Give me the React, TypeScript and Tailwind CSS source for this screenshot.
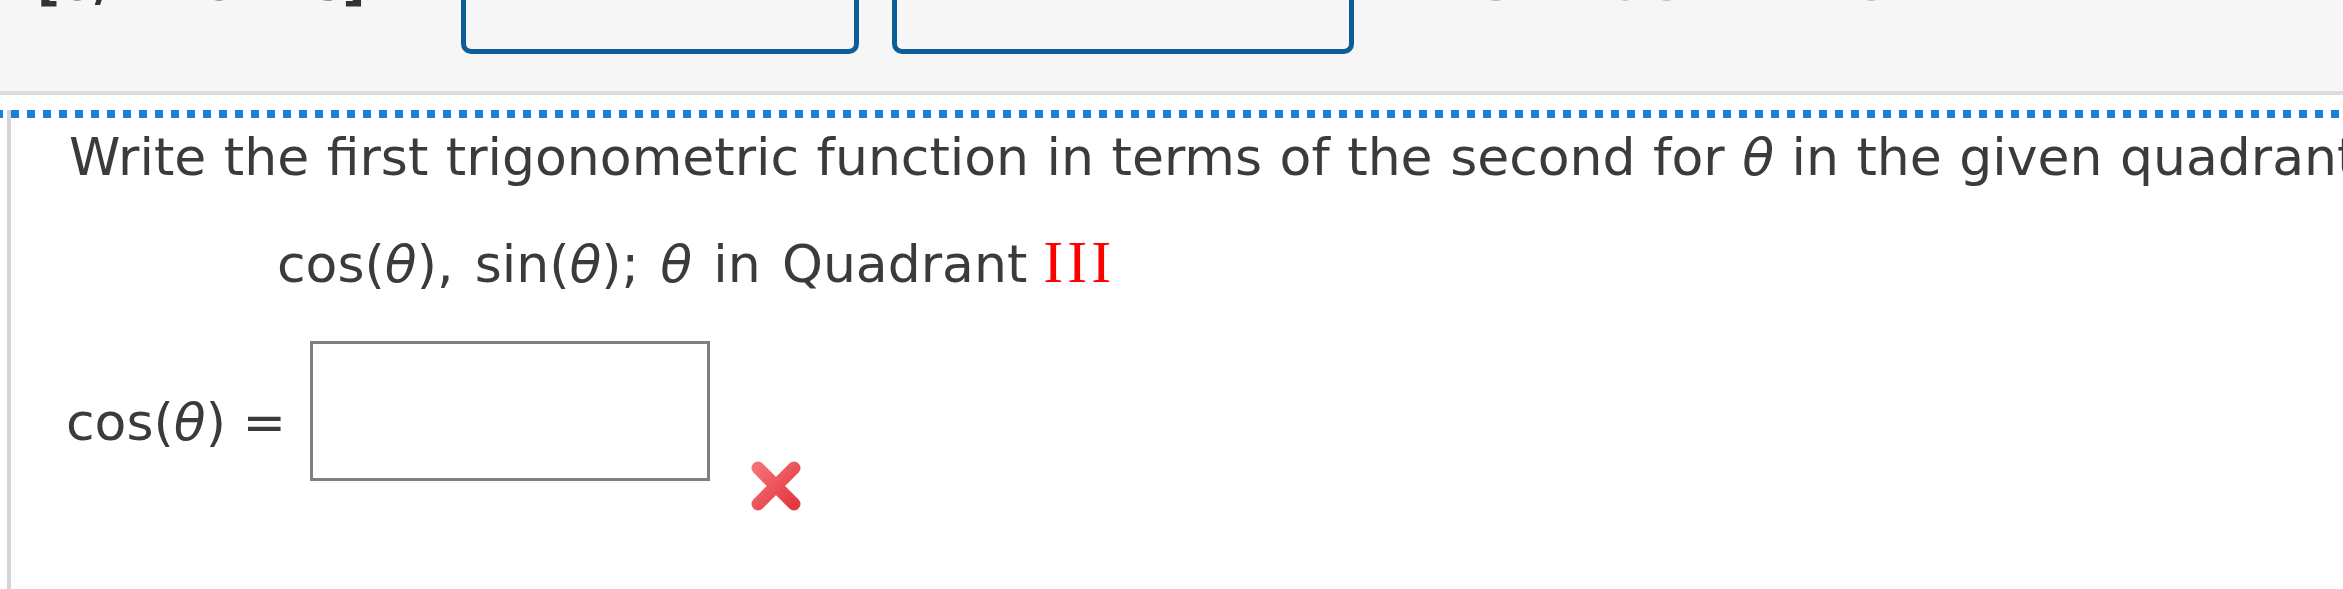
import React from "react";

function WrongMark() {
  return (
    <svg width="54" height="54" viewBox="0 0 54 54" aria-hidden>
      <defs>
        <linearGradient id="xg" x1="0" y1="0" x2="1" y2="1">
          <stop offset="0" stopColor="#f46e73" />
          <stop offset="1" stopColor="#e33a41" />
        </linearGradient>
      </defs>
      <g stroke="url(#xg)" strokeWidth="13" strokeLinecap="round">
        <line x1="9" y1="9" x2="45" y2="45" />
        <line x1="45" y1="9" x2="9" y2="45" />
      </g>
    </svg>
  );
}

function Theta() {
  return <i>θ</i>;
}

/**
 * Question card: header strip with clipped buttons, prompt, answer row.
 */
export default function App() {
  return (
    <div className="h-[589px] w-full overflow-hidden bg-white font-['DejaVu_Sans',sans-serif] text-[#3b3b3b]">
      <div className="flex h-[95px] items-start overflow-hidden border-b-4 border-[#dcdcdc] bg-[#f6f6f6]">
        <span className="-mt-[49px] ml-[37px] whitespace-nowrap text-[50px] font-bold leading-[64px] text-[#333]">
          [0/1 Points]
        </span>
        <div className="-mt-[56px] ml-[96px] flex h-[110px] w-[398px] items-start justify-center rounded-[10px] border-[5px] border-[#0c5f96] pt-[9px]">
          <span className="whitespace-nowrap text-[44px] font-bold leading-[52px] text-[#0c5f96]">
            DETAILS
          </span>
        </div>
        <div className="-mt-[56px] ml-[33px] flex h-[110px] w-[462px] items-start justify-center rounded-[10px] border-[5px] border-[#0c5f96] pt-[9px]">
          <span className="whitespace-nowrap text-[44px] font-bold leading-[52px] text-[#0c5f96]">
            MY NOTES
          </span>
        </div>
        <span className="-mt-[43px] ml-[84px] whitespace-nowrap text-[50px] font-bold leading-[52px] text-[#8a8a8a]">
          ASK YOUR TEACHER
        </span>
      </div>

      <div className="ml-[7px] h-[494px] border-l-4 border-[#d4d4d4]">
        <div className="-ml-[11px] mt-[15px] h-[8px] bg-[repeating-linear-gradient(90deg,#1a7fd8_0_3px,transparent_3px_11px,#1a7fd8_11px_16px)]" />

        <div className="mt-[7px] whitespace-nowrap pl-[58px] text-[52px] leading-[64px] [word-spacing:1px]">
          Write the first trigonometric function in terms of the second for{" "}
          <Theta /> in the given quadrant.
        </div>

        <div className="mt-[43px] flex items-baseline whitespace-nowrap pl-[266px] text-[52px] leading-[64px]">
          <span className="[word-spacing:0.09em]">
            cos(<Theta />), sin(<Theta />); <Theta /> in Quadrant
          </span>
          <span className="ml-[16px] font-['Liberation_Serif',serif] text-[60px] leading-none tracking-[4px] text-[#ff0000]">
            III
          </span>
        </div>

        <div className="mt-[45px] flex items-start pl-[55px]">
          <span className="mt-[49px] whitespace-nowrap text-[52px] leading-[64px]">
            cos(<Theta />) =
          </span>
          <div className="ml-[24px] h-[140px] w-[400px] border-[3px] border-[#808080] bg-white" />
          <div className="ml-[39px] mt-[118px]">
            <WrongMark />
          </div>
        </div>
      </div>
    </div>
  );
}
